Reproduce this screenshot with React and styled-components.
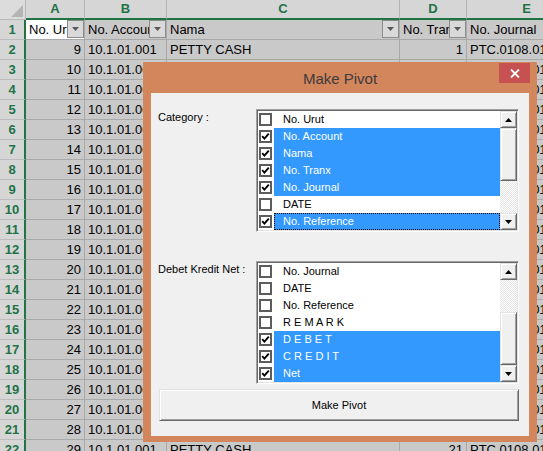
import React from "react";
import styled, { createGlobalStyle, css } from "styled-components";

const GlobalStyle = createGlobalStyle`
  html, body {
    margin: 0;
    padding: 0;
    overflow: hidden;
    background: #ffffff;
  }
  * {
    box-sizing: border-box;
  }
`;

const GREEN = "#217346";

const Screen = styled.div`
  position: relative;
  width: 543px;
  height: 451px;
  overflow: hidden;
  font-family: "Liberation Sans", Arial, sans-serif;
`;

// ---------- spreadsheet ----------

const Sheet = styled.div`
  display: grid;
  grid-template-columns: 26px 59px 82px 233px 67px 120px;
  grid-auto-rows: 20px;
  width: 587px;
  font-size: 13px;
  color: #000;
`;

const Corner = styled.div`
  background: #dcdcdc;
  border-right: 1px solid #b8b8b8;
  border-bottom: 1px solid #b8b8b8;
  display: flex;
  align-items: flex-end;
  justify-content: flex-end;
  padding: 0 2px 2px 0;
`;

const ColHead = styled.div`
  background: #d6d6d6;
  border-right: 1px solid #b4b4b4;
  border-bottom: 2px solid ${GREEN};
  color: ${GREEN};
  font-weight: bold;
  text-align: center;
  line-height: 18px;
`;

const RowHead = styled.div`
  background: #d6d6d6;
  border-right: 2px solid ${GREEN};
  border-bottom: 1px solid #bcbcbc;
  color: ${GREEN};
  font-weight: bold;
  text-align: center;
  line-height: 19px;
`;

const Cell = styled.div`
  background: ${(p) => (p.$active ? "#ffffff" : "#c9c9c9")};
  border-right: 1px solid #a9a9a9;
  border-bottom: 1px solid #a9a9a9;
  padding: 0 3px;
  text-align: ${(p) => p.$align || "left"};
  white-space: nowrap;
  overflow: hidden;
  line-height: 19px;
`;

const HeadCell = styled(Cell)`
  display: flex;
  align-items: flex-start;
  padding-right: 0;
`;

const HeadText = styled.span`
  flex: 1;
  overflow: hidden;
  white-space: nowrap;
`;

const FilterBtn = styled.span`
  flex: none;
  width: 17px;
  height: 18px;
  border: 1px solid #8c8c8c;
  background: #d9d9d9;
  display: flex;
  align-items: center;
  justify-content: center;
`;

// ---------- dialog ----------

const Dialog = styled.div`
  position: absolute;
  left: 143px;
  top: 62px;
  width: 394px;
  height: 380px;
  background: #d3865c;
  display: flex;
  flex-direction: column;
  padding: 0 8px 6px 8px;
`;

const TitleBar = styled.div`
  height: 31px;
  display: grid;
  grid-template-columns: 1fr auto 1fr;
  align-items: center;
  margin: 0 -8px;
`;

const Title = styled.div`
  grid-column: 2;
  font-size: 15px;
  color: #3c3c3c;
  padding-top: 1px;
`;

const CloseBtn = styled.div`
  grid-column: 3;
  justify-self: end;
  align-self: start;
  margin: 1px 7px 0 0;
  width: 31px;
  height: 20px;
  background: #c75050;
  display: flex;
  align-items: center;
  justify-content: center;
`;

const Client = styled.div`
  flex: 1;
  background: #f0f0f0;
  padding: 16px 0 0 7px;
  display: flex;
  flex-direction: column;
  font-size: 11px;
  color: #000;
`;

const Field = styled.div`
  display: flex;
  margin-top: ${(p) => p.$gap || 0}px;
`;

const FieldLabel = styled.div`
  width: 98px;
  flex: none;
  padding-top: 2px;
  line-height: 13px;
  white-space: nowrap;
`;

const ListBox = styled.div`
  width: 263px;
  height: 123px;
  display: flex;
  border: 1px solid;
  border-color: #a0a0a0 #ffffff #ffffff #a0a0a0;
  box-shadow: inset 1px 1px #696969, inset -1px -1px #e3e3e3;
  padding: 1px;
  background: #ffffff;
`;

const Items = styled.div`
  flex: 1;
  display: flex;
  flex-direction: column;
  overflow: hidden;
`;

const Item = styled.div`
  height: 17px;
  flex: none;
  display: flex;
  align-items: center;
`;

const CheckBox = styled.span`
  flex: none;
  width: 13px;
  height: 13px;
  margin-left: 1px;
  border: 2px solid #5c5c5c;
  background: #ffffff;
  display: flex;
  align-items: center;
  justify-content: center;
`;

const ItemText = styled.span`
  flex: 1;
  height: 17px;
  margin-left: 2px;
  padding-left: 9px;
  line-height: 17px;
  white-space: nowrap;
  background: ${(p) => (p.$selected ? "#3399ff" : "transparent")};
  color: ${(p) => (p.$selected ? "#ffffff" : "#000000")};
  ${(p) =>
    p.$focus &&
    css`
      outline: 1px dotted #000;
      outline-offset: -1px;
    `}
`;

const raised = css`
  background: #f0f0f0;
  border: 1px solid;
  border-color: #e3e3e3 #696969 #696969 #e3e3e3;
  box-shadow: inset 1px 1px #ffffff, inset -1px -1px #a0a0a0;
`;

const ScrollBar = styled.div`
  width: 17px;
  flex: none;
  display: flex;
  flex-direction: column;
`;

const ScrollBtn = styled.div`
  ${raised};
  height: 17px;
  flex: none;
  display: flex;
  align-items: center;
  justify-content: center;
`;

const Thumb = styled.div`
  ${raised};
  height: 53px;
  flex: none;
`;

const Track = styled.div`
  flex: 1;
  background: repeating-conic-gradient(#ffffff 0 25%, #e4e4e4 0 50%) 0 0 / 2px 2px;
`;

const ActionBtn = styled.div`
  ${raised};
  margin: 5px 0 0 1px;
  width: 360px;
  height: 32px;
  display: flex;
  align-items: center;
  justify-content: center;
  font-size: 11px;
`;

// ---------- small drawings ----------

const Tri = ({ up, color = "#000" }) => (
  <svg width="7" height="4" viewBox="0 0 7 4">
    <polygon points={up ? "0,4 7,4 3.5,0" : "0,0 7,0 3.5,4"} fill={color} />
  </svg>
);

const Check = () => (
  <svg width="9" height="9" viewBox="0 0 9 9">
    <polyline
      points="1.2,4.2 3.4,6.6 7.8,1.6"
      fill="none"
      stroke="#000"
      strokeWidth="1.9"
    />
  </svg>
);

const CheckList = ({ items, scroll }) => (
  <ListBox>
    <Items>
      {items.map((it) => (
        <Item key={it.label}>
          <CheckBox>{it.checked && <Check />}</CheckBox>
          <ItemText $selected={it.checked} $focus={it.focus}>
            {it.label}
          </ItemText>
        </Item>
      ))}
    </Items>
    <ScrollBar>
      <ScrollBtn>
        <Tri up />
      </ScrollBtn>
      {scroll === "top" ? (
        <>
          <Thumb />
          <Track />
        </>
      ) : (
        <>
          <Track />
          <Thumb />
        </>
      )}
      <ScrollBtn>
        <Tri />
      </ScrollBtn>
    </ScrollBar>
  </ListBox>
);

const categoryItems = [
  { label: "No. Urut", checked: false },
  { label: "No. Account", checked: true },
  { label: "Nama", checked: true },
  { label: "No. Tranx", checked: true },
  { label: "No. Journal", checked: true },
  { label: "DATE", checked: false },
  { label: "No. Reference", checked: true, focus: true },
];

const netItems = [
  { label: "No. Journal", checked: false },
  { label: "DATE", checked: false },
  { label: "No. Reference", checked: false },
  { label: "R E M A R K", checked: false },
  { label: "D E B E T", checked: true },
  { label: "C R E D I T", checked: true },
  { label: "Net", checked: true },
];

const headers = ["No. Urut", "No. Account", "Nama", "No. Tranx", "No. Journal"];
const dataRows = Array.from({ length: 21 }, (_, i) => i + 2);

const App = () => {
  return (
    <Screen>
      <GlobalStyle />
      <Sheet>
        <Corner>
          <svg width="12" height="12" viewBox="0 0 12 12">
            <polygon points="12,0 12,12 0,12" fill="#b4b4b4" />
          </svg>
        </Corner>
        {["A", "B", "C", "D", "E"].map((c) => (
          <ColHead key={c}>{c}</ColHead>
        ))}

        <RowHead>1</RowHead>
        {headers.map((h, i) => (
          <HeadCell key={h} $active={i === 0}>
            <HeadText>{h}</HeadText>
            <FilterBtn>
              <Tri color="#595959" />
            </FilterBtn>
          </HeadCell>
        ))}

        {dataRows.map((r) => (
          <React.Fragment key={r}>
            <RowHead>{r}</RowHead>
            <Cell $align="right">{r + 7}</Cell>
            <Cell>10.1.01.001</Cell>
            <Cell>PETTY CASH</Cell>
            <Cell $align="right">{r - 1}</Cell>
            <Cell>PTC.0108.01</Cell>
          </React.Fragment>
        ))}
      </Sheet>

      <Dialog>
        <TitleBar>
          <Title>Make Pivot</Title>
          <CloseBtn>
            <svg width="10" height="9" viewBox="0 0 10 9">
              <path d="M1 0.5 L9 8.5 M9 0.5 L1 8.5" stroke="#fff" strokeWidth="1.8" />
            </svg>
          </CloseBtn>
        </TitleBar>
        <Client>
          <Field>
            <FieldLabel>Category :</FieldLabel>
            <CheckList items={categoryItems} scroll="top" />
          </Field>
          <Field $gap={29}>
            <FieldLabel>Debet Kredit Net :</FieldLabel>
            <CheckList items={netItems} scroll="bottom" />
          </Field>
          <ActionBtn>Make Pivot</ActionBtn>
        </Client>
      </Dialog>
    </Screen>
  );
};

export default App;
